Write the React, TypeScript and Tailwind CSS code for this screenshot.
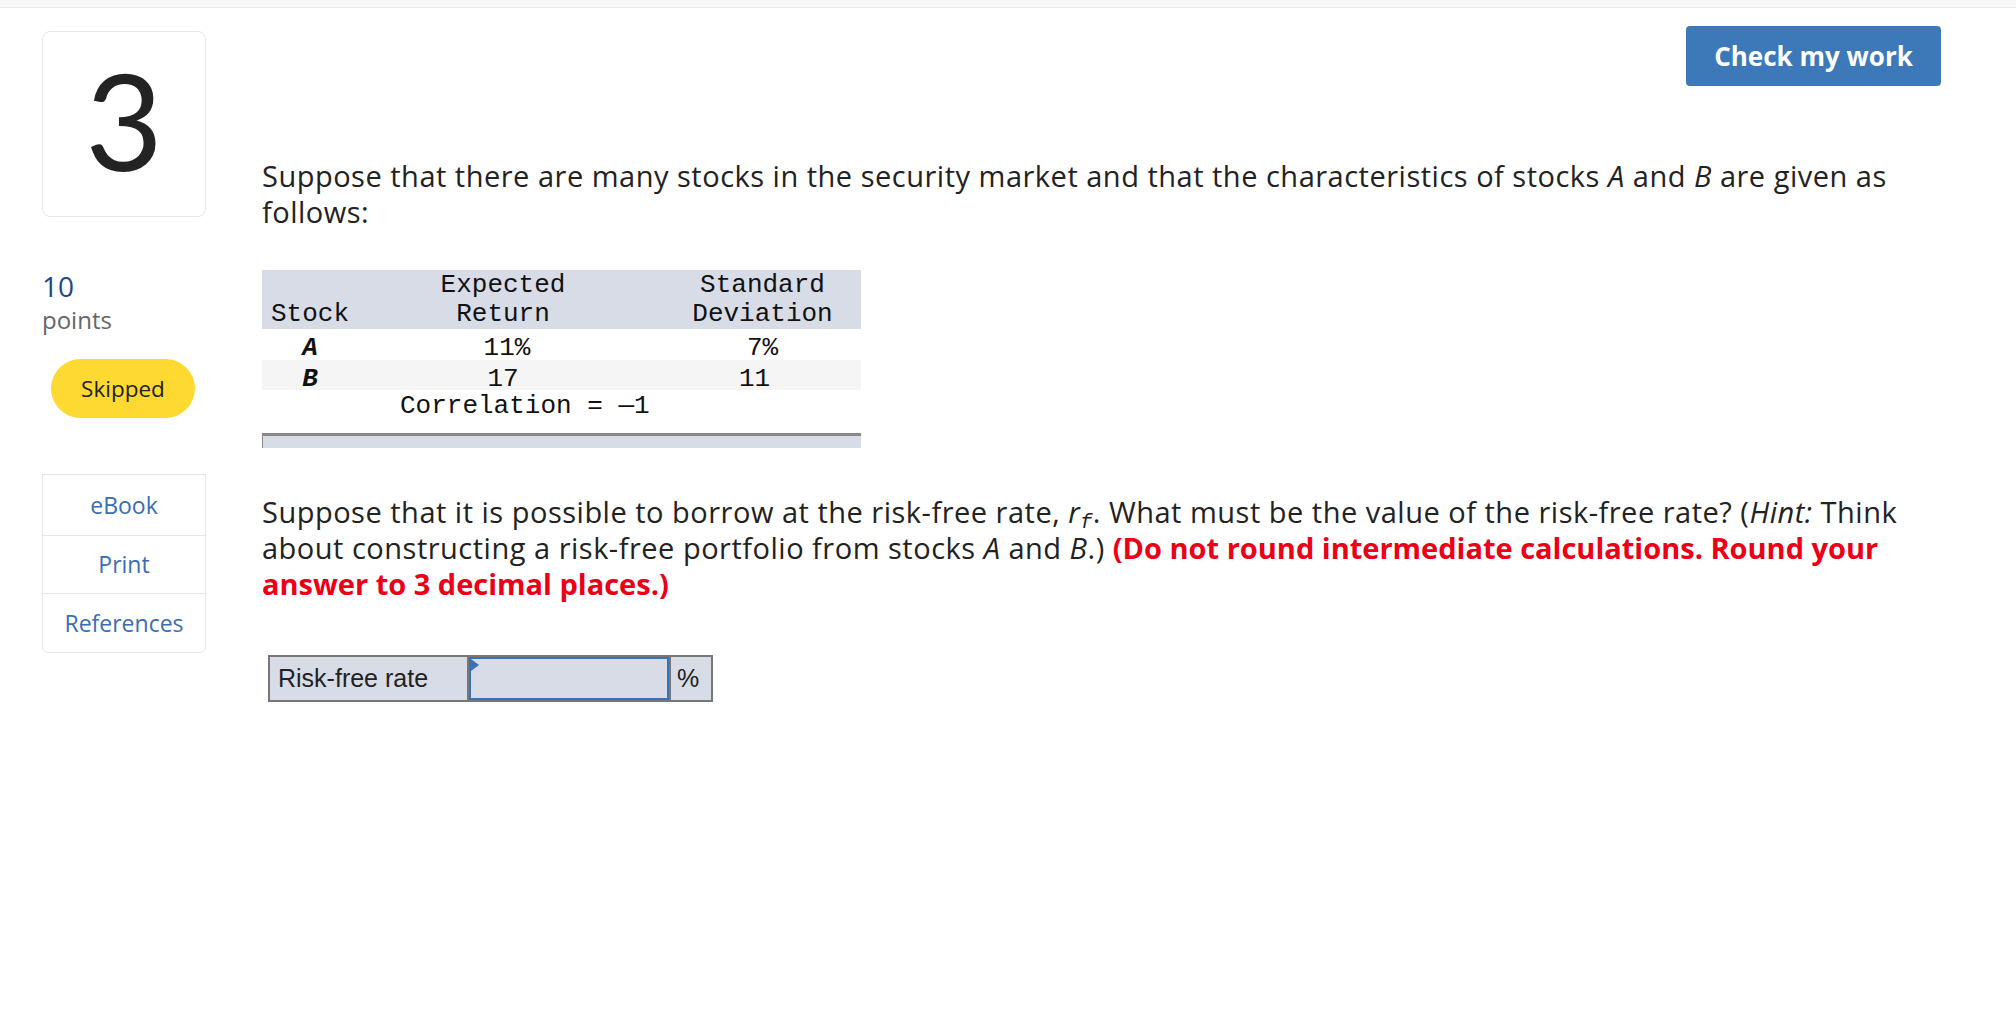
export default function App() {
  const body = { fontFamily: "'Open Sans', Lato, sans-serif" };
  const mono = { fontFamily: "'Liberation Mono', 'Courier New', monospace" };
  const arial = { fontFamily: "'Liberation Sans', Arial, sans-serif" };

  return (
    <div className="min-h-screen bg-white text-[#222]" style={body}>
      {/* thin top strip */}
      <div className="h-2 bg-[#f8f8f8] border-b border-[#ececec]" />

      <div className="flex">
        {/* left rail */}
        <aside className="w-[206px] shrink-0 pl-[42px]">
          <div className="mt-[23px] h-[186px] w-[164px] rounded-lg border border-[#e8e8e8] flex items-center justify-center">
            <span className="text-[134px] leading-none text-[#232323] -mt-2" style={{ fontFamily: "Lato, sans-serif" }}>
              3
            </span>
          </div>

          <div className="mt-[51px] text-[28px] leading-[36px] text-[#1c4a86]">10</div>
          <div className="text-[24px] leading-[31px] text-[#666]">points</div>

          <div className="mt-[24px] ml-[9px] h-[59px] w-[144px] rounded-full bg-[#fdd932] flex items-center justify-center text-[22.5px] text-[#222]">
            Skipped
          </div>

          <div className="mt-[56px] w-[164px] border border-[#e6e6e6] rounded-b-md text-[23px] text-[#3b6db3]">
            <div className="h-[61px] flex items-center justify-center border-b border-[#e6e6e6]">eBook</div>
            <div className="h-[58px] flex items-center justify-center border-b border-[#e6e6e6]">Print</div>
            <div className="h-[58px] flex items-center justify-center">References</div>
          </div>
        </aside>

        {/* question column */}
        <main className="flex-1 pl-[56px] pr-[75px]">
          <div className="flex justify-end mt-[18px]">
            <button className="h-[60px] w-[255px] rounded-[4px] bg-[#3d78b8] text-white text-[26px] font-bold">
              Check my work
            </button>
          </div>

          <p className="mt-[72px] text-[29px] leading-[36px] tracking-[0.5px]">
            Suppose that there are many stocks in the security market and that the characteristics of stocks{" "}
            <i>A</i> and <i>B</i> are given as follows:
          </p>

          {/* data table */}
          <div className="mt-[40px] w-[599px] text-[26px] text-[#111]" style={mono}>
            <div className="grid grid-cols-[96px_290px_213px] bg-[#d8dce6] h-[59px] leading-[29px] pt-[1px]">
              <div className="self-end text-center">Stock</div>
              <div className="text-center">
                Expected
                <br />
                Return
              </div>
              <div className="text-center pl-4">
                Standard
                <br />
                Deviation
              </div>
            </div>
            <div className="grid grid-cols-[96px_290px_213px] h-[31px] items-center">
              <div className="text-center italic font-bold">A</div>
              <div className="text-center pl-2">11%</div>
              <div className="text-center pl-4">7%</div>
            </div>
            <div className="grid grid-cols-[96px_290px_213px] h-[30px] items-center bg-[#f5f5f5]">
              <div className="text-center italic font-bold">B</div>
              <div className="text-center">17</div>
              <div className="text-center">11</div>
            </div>
            <div className="h-[33px] flex items-center pl-[138px]">Correlation = —1</div>
            <div className="mt-[10px] h-[15px] border-t-[3px] border-l border-[#888] bg-[#d8dce6]" />
          </div>

          <p className="mt-[46px] text-[29px] leading-[36px] tracking-[0.5px]">
            Suppose that it is possible to borrow at the risk-free rate, <i>r</i>
            <sub className="text-[20px] italic" style={mono}>f</sub>. What must be the value of the risk-free rate? (
            <i>Hint:</i> Think about constructing a risk-free portfolio from stocks <i>A</i> and <i>B</i>.){" "}
            <b className="text-[#ec0018] tracking-normal">
              (Do not round intermediate calculations. Round your answer to 3 decimal places.)
            </b>
          </p>

          {/* answer row */}
          <div className="mt-[53px] ml-[6px] flex w-[445px] h-[47px] border-2 border-[#777] bg-[#d8dce6] text-[25px] text-[#222]" style={arial}>
            <div className="w-[199px] flex items-center pl-[8px] border-r-2 border-[#777]">Risk-free rate</div>
            <div className="w-[200px] relative border-2 border-[#3c72b5]">
              <div className="absolute left-0 top-0 w-0 h-0 border-t-[6px] border-b-[6px] border-l-[8px] border-t-transparent border-b-transparent border-l-[#3c72b5]" />
            </div>
            <div className="flex-1 flex items-center pl-[6px] border-l-2 border-[#777]">%</div>
          </div>
        </main>
      </div>
    </div>
  );
}
